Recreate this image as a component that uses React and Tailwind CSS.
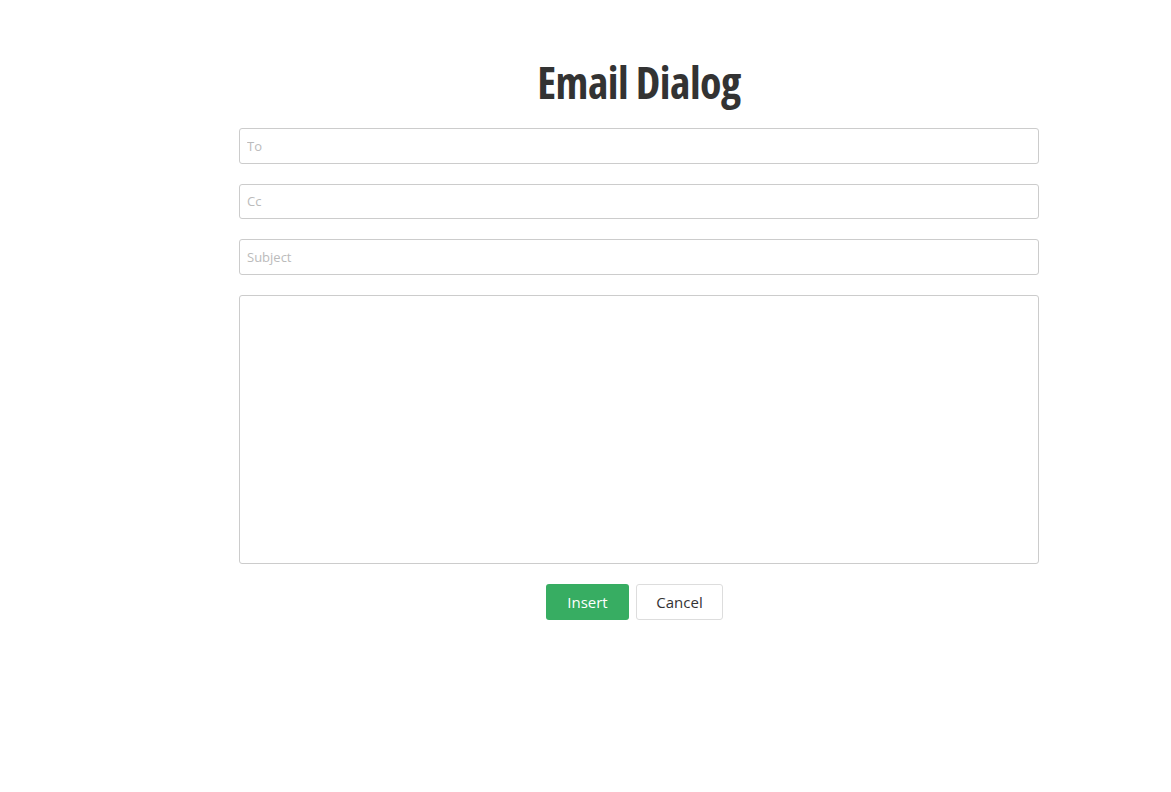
export default function App() {
  return (
    <div className="min-h-screen bg-white" style={{ fontFamily: '"Open Sans", sans-serif' }}>
      <div className="ml-[239px] w-[800px] pt-[52px]">
        <h1 className="text-center text-[44px] leading-[60px] font-bold font-stretch-condensed tracking-[-0.5px] text-[#333] mb-[16px]">
          Email Dialog
        </h1>
        <form>
          <div className="flex flex-col gap-[20.17px]">
            <input
              type="text"
              placeholder="To"
              className="h-[35.5px] w-full border border-[#ccc] rounded-[3px] px-[7px] text-[13px] text-[#555] placeholder:text-[#bbb] focus:outline-none"
            />
            <input
              type="text"
              placeholder="Cc"
              className="h-[35.5px] w-full border border-[#ccc] rounded-[3px] px-[7px] text-[13px] text-[#555] placeholder:text-[#bbb] focus:outline-none"
            />
            <input
              type="text"
              placeholder="Subject"
              className="h-[35.5px] w-full border border-[#ccc] rounded-[3px] px-[7px] text-[13px] text-[#555] placeholder:text-[#bbb] focus:outline-none"
            />
            <textarea className="h-[269px] w-full border border-[#ccc] rounded-[3px] px-[7px] py-[6px] text-[13px] resize-none focus:outline-none" />
          </div>
          <div className="flex gap-[7px] pl-[307px] mt-[20px]">
            <button
              type="button"
              className="h-[36px] w-[83px] rounded-[3px] bg-[#37ad62] text-white text-[15px]"
            >
              Insert
            </button>
            <button
              type="button"
              className="h-[36px] w-[87px] rounded-[3px] border border-[#ddd] bg-white text-[#333] text-[15px]"
            >
              Cancel
            </button>
          </div>
        </form>
      </div>
    </div>
  );
}
